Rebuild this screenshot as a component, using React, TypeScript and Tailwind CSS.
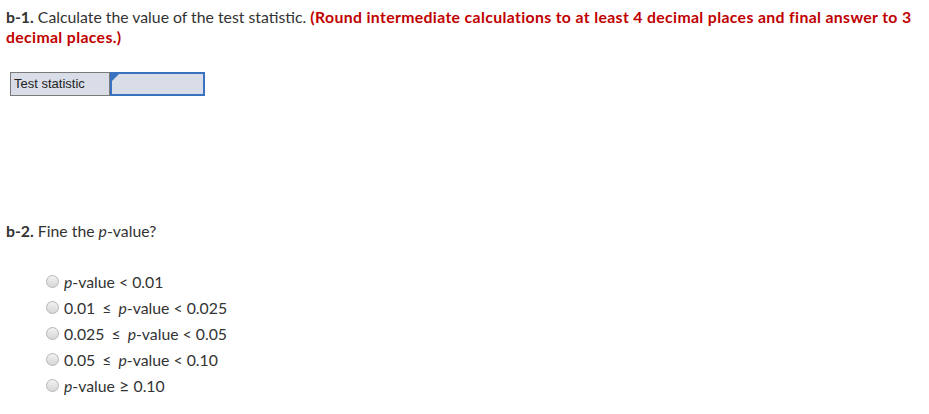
import React from 'react';

const options: React.ReactNode[] = [
  <><i>p</i>-value &lt; 0.01</>,
  <>0.01 <span className="mx-[3px]">≤</span> <i>p</i>-value &lt; 0.025</>,
  <>0.025 <span className="mx-[3px]">≤</span> <i>p</i>-value &lt; 0.05</>,
  <>0.05 <span className="mx-[3px]">≤</span> <i>p</i>-value &lt; 0.10</>,
  <><i>p</i>-value <span className="text-[18px] leading-none">≥</span> 0.10</>,
];

export default function App() {
  return (
    <div className="w-[929px] h-[414px] bg-white text-[#333] font-['Lato',sans-serif] text-[15.8px] leading-[20px] pl-[6px] pt-[7px]">
      <p className="pr-[12px]">
        <b>b-1.</b> Calculate the value of the test statistic.{' '}
        <b className="text-[#c00000] tracking-[0.35px]">
          (Round intermediate calculations to at least 4 decimal places and final answer to 3 decimal places.)
        </b>
      </p>

      <div className="mt-[25px] ml-[4px] flex w-[195px] h-[24px] bg-[#d9dde8] border border-[#7a7a7a]">
        <div className="w-[99px] border-r border-[#7a7a7a] pl-[3px] font-['Liberation_Sans',sans-serif] text-[13px] text-[#222] leading-[22px]">
          Test statistic
        </div>
        <div className="relative flex-1 border-2 border-[#3a72c2] -my-px -mr-px">
          <span className="absolute left-0 top-0 w-0 h-0 border-t-[7px] border-r-[7px] border-t-[#3a72c2] border-r-transparent" />
        </div>
      </div>

      <p className="mt-[125px]">
        <b>b-2.</b> Fine the <i>p</i>-value?
      </p>

      <div className="mt-[31px] ml-[40px] flex flex-col gap-[7px]">
        {options.map((o, i) => (
          <label key={i} className="flex items-center h-[19px]">
            <span className="w-[13px] h-[13px] rounded-full border border-[#b5b5b5] bg-gradient-to-b from-[#f2f2f2] to-[#d6d6d6] mr-[5px]" />
            <span>{o}</span>
          </label>
        ))}
      </div>
    </div>
  );
}
